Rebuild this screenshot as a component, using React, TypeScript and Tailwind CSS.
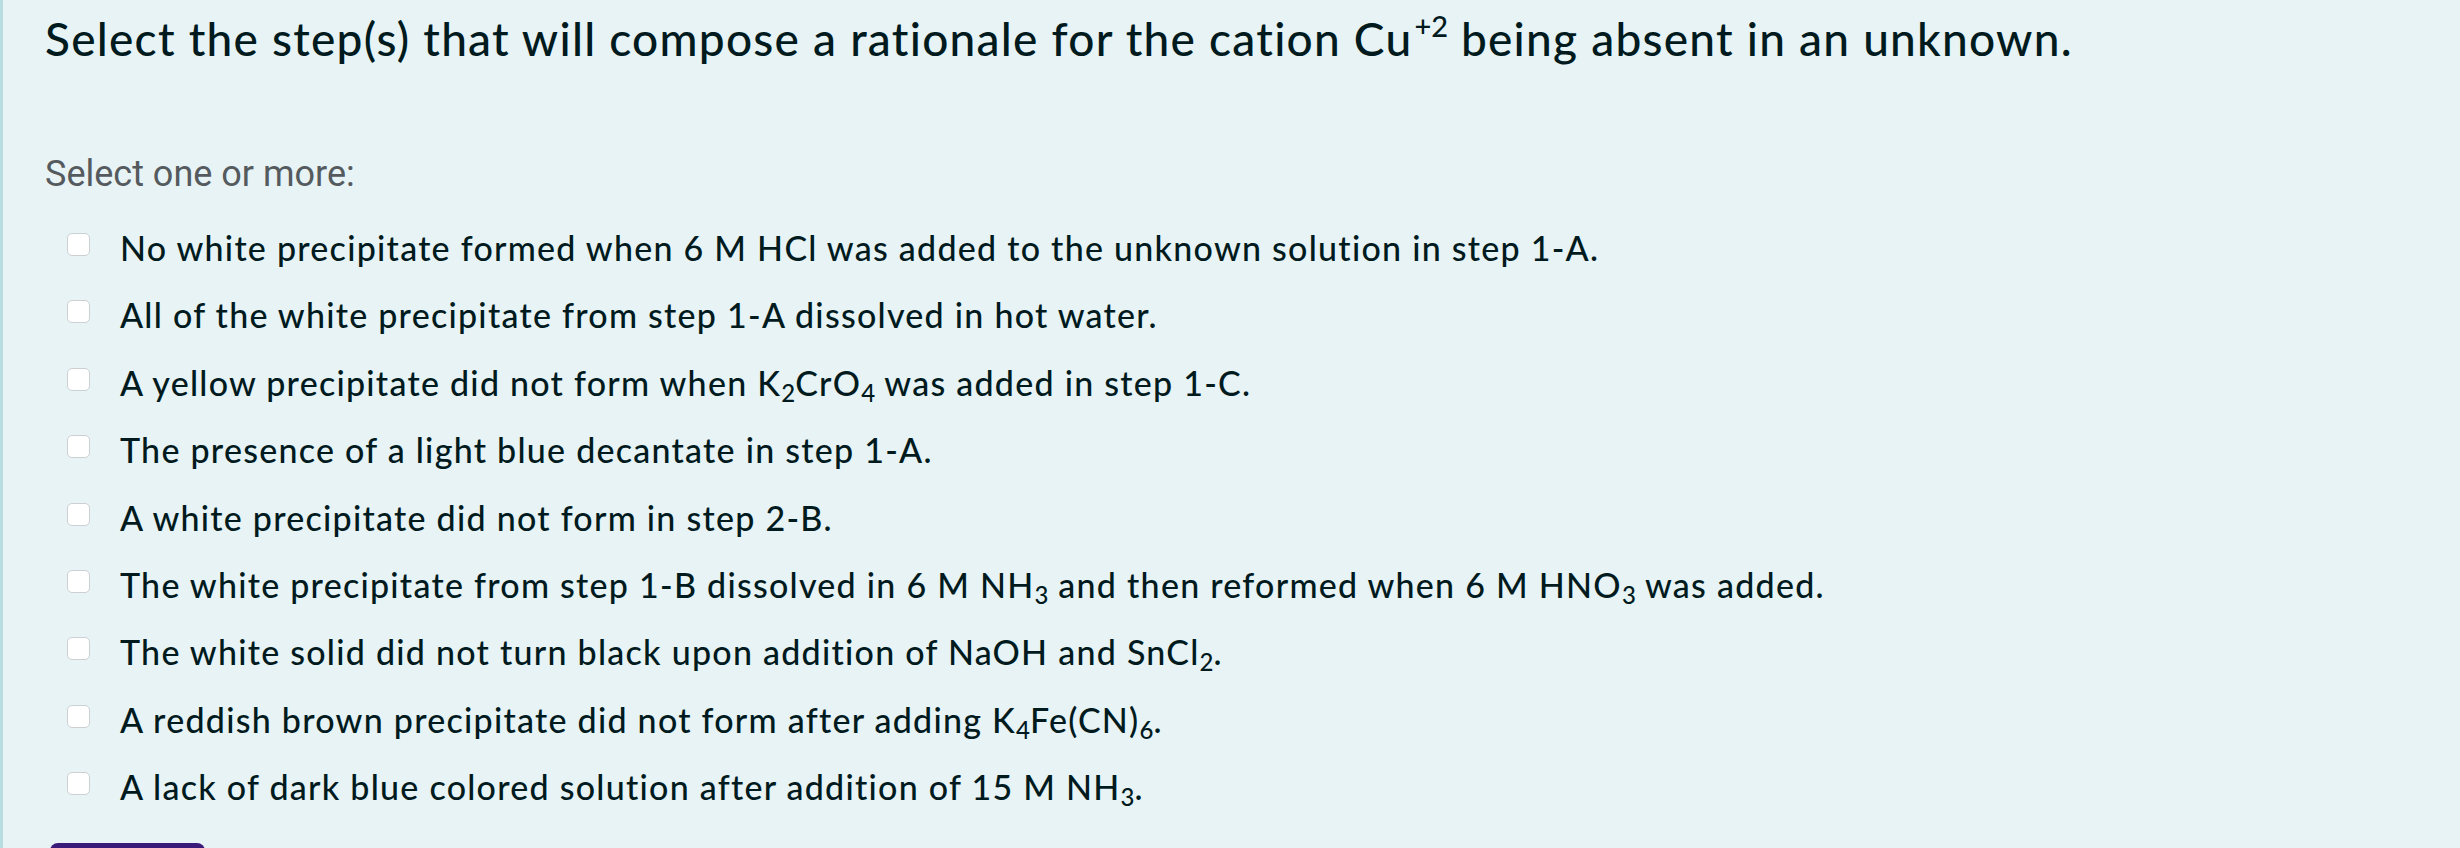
import React from "react";

type Part = string | { sub: string };

const options: Part[][] = [
  ["No white precipitate formed when 6 M HCl was added to the unknown solution in step 1-A."],
  ["All of the white precipitate from step 1-A dissolved in hot water."],
  ["A yellow precipitate did not form when K", { sub: "2" }, "CrO", { sub: "4" }, " was added in step 1-C."],
  ["The presence of a light blue decantate in step 1-A."],
  ["A white precipitate did not form in step 2-B."],
  [
    "The white precipitate from step 1-B dissolved in 6 M NH",
    { sub: "3" },
    " and then reformed when 6 M HNO",
    { sub: "3" },
    " was added.",
  ],
  ["The white solid did not turn black upon addition of NaOH and SnCl", { sub: "2" }, "."],
  ["A reddish brown precipitate did not form after adding K", { sub: "4" }, "Fe(CN)", { sub: "6" }, "."],
  ["A lack of dark blue colored solution after addition of 15 M NH", { sub: "3" }, "."],
];

function Option({ parts, idx }: { parts: Part[]; idx: number }) {
  const id = `opt-${idx}`;
  return (
    <div className="flex items-start h-[67.4px]">
      <input
        id={id}
        type="checkbox"
        className="appearance-none mt-[19px] ml-[22px] w-[23px] h-[23px] shrink-0 rounded-[5px] border border-[#cdd0d3] bg-white"
      />
      <label
        htmlFor={id}
        className="ml-[30px] whitespace-nowrap text-[34px] font-medium leading-[67.4px] text-[#001a1e] tracking-[1.25px]"
        style={{ fontFamily: "Lato, 'Noto Sans', sans-serif" }}
      >
        {parts.map((p, i) =>
          typeof p === "string" ? (
            <React.Fragment key={i}>{p}</React.Fragment>
          ) : (
            <sub key={i} className="text-[24px] bottom-[-6px] tracking-normal">
              {p.sub}
            </sub>
          )
        )}
      </label>
    </div>
  );
}

export default function App() {
  return (
    <div className="min-h-[848px] w-full bg-[#e7f3f5] border-l-[3px] border-[#b8dce2] pl-[42px] pt-[12px] text-[#001a1e]">
      <h1
        className="text-[46px] leading-[54px] whitespace-nowrap tracking-[1.25px] font-medium"
        style={{ fontFamily: "Lato, 'Noto Sans', sans-serif" }}
      >
        Select the step(s) that will compose a rationale for the cation Cu
        <sup className="text-[29px] top-[-19px] ml-[2px] tracking-normal">+2</sup> being absent in an unknown.
      </h1>

      <p
        className="mt-[87px] text-[36px] leading-[42px] text-[#555a5e]"
        style={{ fontFamily: "Roboto, 'Liberation Sans', sans-serif" }}
      >
        Select one or more:
      </p>

      <div className="mt-[19px] flex flex-col">
        {options.map((parts, i) => (
          <Option key={i} parts={parts} idx={i} />
        ))}
      </div>

      <button
        type="button"
        className="mt-[22px] ml-[5px] w-[155px] h-[56px] rounded-[8px] bg-[#3b1b7a] text-white text-[30px]"
        style={{ fontFamily: "Lato, sans-serif" }}
      >
        Check
      </button>
    </div>
  );
}
